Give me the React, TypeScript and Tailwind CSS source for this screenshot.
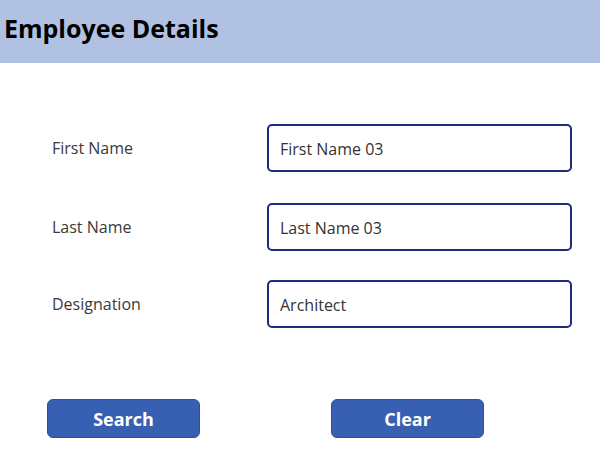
export default function App() {
  const fields = [
    { label: 'First Name', value: 'First Name 03', mt: 'mt-[61px]' },
    { label: 'Last Name', value: 'Last Name 03', mt: 'mt-[31px]' },
    { label: 'Designation', value: 'Architect', mt: 'mt-[29px]' },
  ];

  return (
    <div className="w-[600px] h-[464px] bg-white font-['Open_Sans',sans-serif] overflow-hidden">
      <div className="h-[63px] bg-[#b0c1e1] flex items-center pl-[4px] pb-[6px]">
        <h1 className="text-[25px] font-bold text-black">Employee Details</h1>
      </div>

      {fields.map((f) => (
        <div key={f.label} className={`${f.mt} flex items-center`}>
          <div className="w-[267px] pl-[52px] text-[16px] text-[#3a3a3a]">{f.label}</div>
          <div className="w-[305px] h-[48px] border-2 border-[#1f2c7c] rounded-[5px] flex items-center pl-[11px] pt-[1px] text-[16px] text-[#333333]">
            {f.value}
          </div>
        </div>
      ))}

      <div className="mt-[71px] flex">
        <button className="ml-[47px] w-[153px] h-[39px] rounded-[6px] bg-[#3860b2] border border-[#2f4f98] text-white text-[18px] font-bold pt-[1px]">
          Search
        </button>
        <button className="ml-[131px] w-[153px] h-[39px] rounded-[6px] bg-[#3860b2] border border-[#2f4f98] text-white text-[18px] font-bold pt-[1px]">
          Clear
        </button>
      </div>
    </div>
  );
}
